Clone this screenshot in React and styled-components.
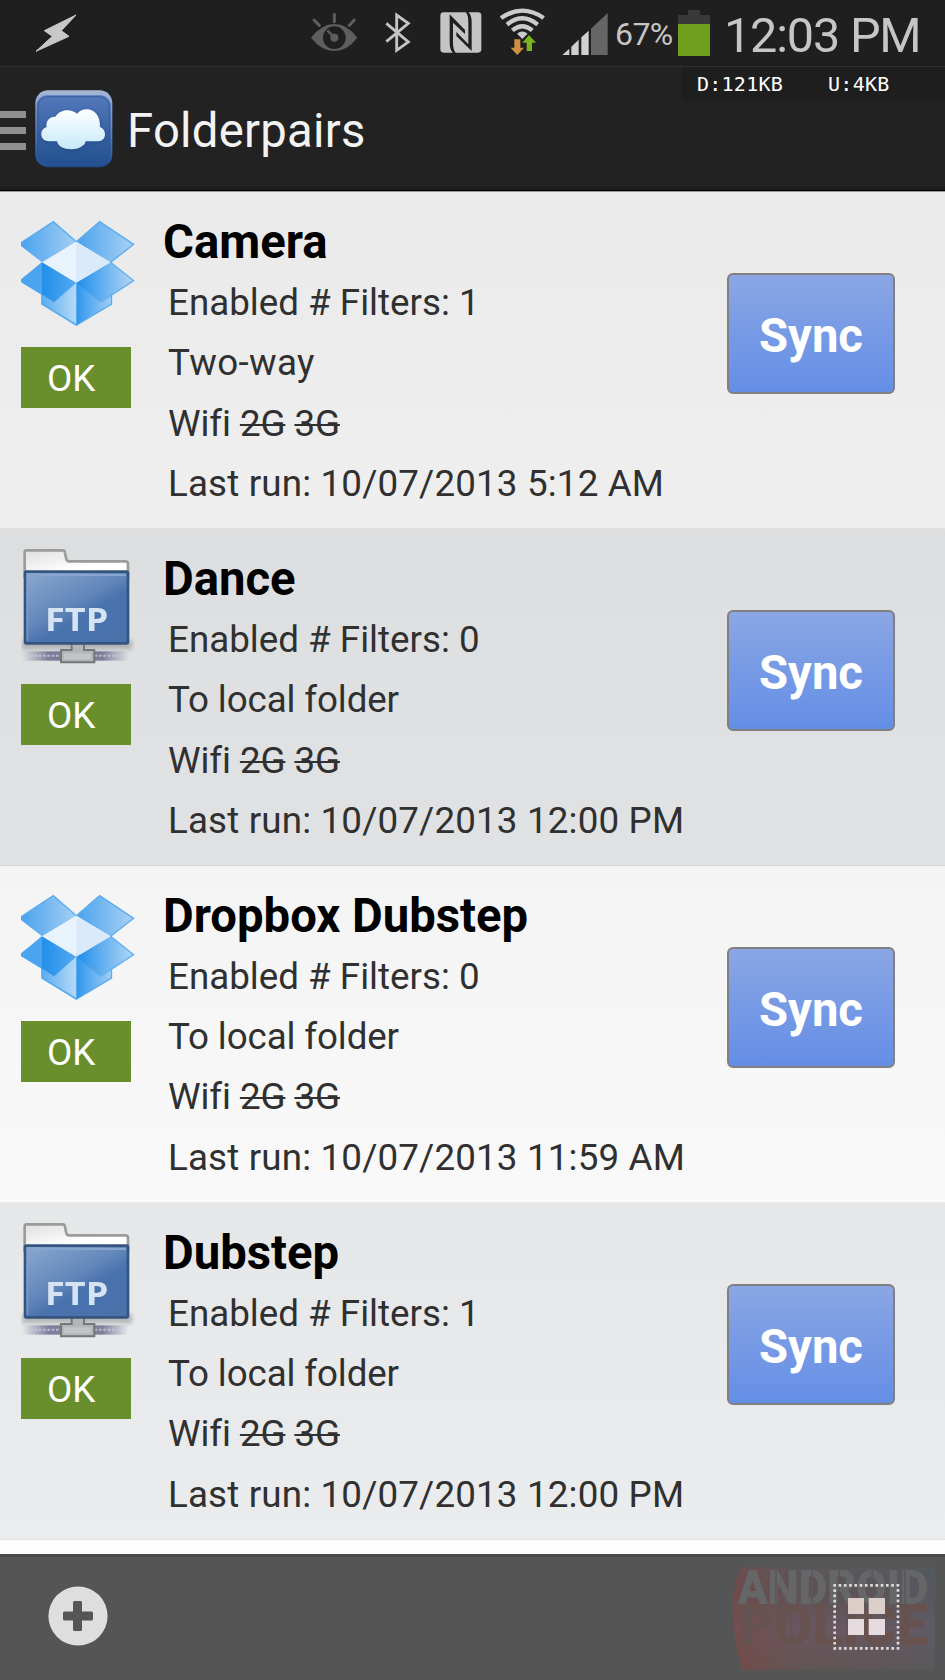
import React from "react";
import styled, { createGlobalStyle } from "styled-components";

const pairs = [
  {
    name: "Camera",
    service: "dropbox",
    filters: 1,
    direction: "Two-way",
    lastRun: "10/07/2013 5:12 AM",
  },
  {
    name: "Dance",
    service: "ftp",
    filters: 0,
    direction: "To local folder",
    lastRun: "10/07/2013 12:00 PM",
  },
  {
    name: "Dropbox Dubstep",
    service: "dropbox",
    filters: 0,
    direction: "To local folder",
    lastRun: "10/07/2013 11:59 AM",
  },
  {
    name: "Dubstep",
    service: "ftp",
    filters: 1,
    direction: "To local folder",
    lastRun: "10/07/2013 12:00 PM",
  },
];

const directionTracking = {
  "Two-way": 0.35,
  "To local folder": -0.12,
};

const Defs = () => (
  <HiddenSvg width="0" height="0">
    <defs>
      <linearGradient id="flap" x1="0" y1="0" x2="1" y2="0">
        <stop offset="0" stopColor="#4aa2ee" />
        <stop offset="1" stopColor="#a5cff3" />
      </linearGradient>
      <linearGradient id="flapSoft" x1="0" y1="0" x2="1" y2="0">
        <stop offset="0" stopColor="#4aa3ee" />
        <stop offset="1" stopColor="#a9d1f4" />
      </linearGradient>
      <linearGradient id="flapDeep" x1="0" y1="0" x2="1" y2="0">
        <stop offset="0" stopColor="#1f8eea" />
        <stop offset="1" stopColor="#b4d7f6" />
      </linearGradient>
      <linearGradient id="inner" x1="0" y1="0" x2="1" y2="0">
        <stop offset="0.35" stopColor="#1e8eea" />
        <stop offset="1" stopColor="#56aaf0" />
      </linearGradient>
      <linearGradient id="boxRight" x1="0" y1="0" x2="1" y2="0">
        <stop offset="0" stopColor="#2f96ec" />
        <stop offset="1" stopColor="#9fcdf5" />
      </linearGradient>
      <linearGradient id="boxLeft" x1="0" y1="0" x2="1" y2="0">
        <stop offset="0" stopColor="#5dadf0" />
        <stop offset="0.5" stopColor="#b6daf7" />
        <stop offset="1" stopColor="#b6daf7" />
      </linearGradient>
      <linearGradient id="paper" x1="0" y1="0" x2="1" y2="1">
        <stop offset="0" stopColor="#dfdfdf" />
        <stop offset="0.6" stopColor="#ffffff" />
      </linearGradient>
      <linearGradient id="folder" x1="0" y1="0" x2="0.8" y2="1">
        <stop offset="0" stopColor="#8aa9d0" />
        <stop offset="0.5" stopColor="#6286ba" />
        <stop offset="0.65" stopColor="#4a73ad" />
        <stop offset="1" stopColor="#4a72ab" />
      </linearGradient>
      <linearGradient id="wire" x1="0" y1="0" x2="1" y2="0">
        <stop offset="0" stopColor="#60608a" stopOpacity="0" />
        <stop offset="0.25" stopColor="#5c5c80" />
        <stop offset="0.75" stopColor="#5c5c80" />
        <stop offset="1" stopColor="#60608a" stopOpacity="0" />
      </linearGradient>
      <linearGradient id="tile" x1="0" y1="0" x2="0" y2="1">
        <stop offset="0" stopColor="#5478bb" />
        <stop offset="1" stopColor="#22508f" />
      </linearGradient>
      <linearGradient id="tileEdge" x1="0" y1="0" x2="0" y2="1">
        <stop offset="0" stopColor="#a9b9d4" />
        <stop offset="0.12" stopColor="#91aad3" />
        <stop offset="0.7" stopColor="#4673b4" />
        <stop offset="1" stopColor="#1f4a88" />
      </linearGradient>
      <linearGradient id="cloud" x1="0" y1="0" x2="0" y2="1">
        <stop offset="0" stopColor="#ffffff" />
        <stop offset="1" stopColor="#c7e9fa" />
      </linearGradient>
      <linearGradient id="haze" x1="0" y1="0" x2="0" y2="1">
        <stop offset="0" stopColor="#525a5f" />
        <stop offset="0.25" stopColor="#565459" />
        <stop offset="0.6" stopColor="#655b68" />
        <stop offset="0.85" stopColor="#60575b" />
        <stop offset="1" stopColor="#5a5859" />
      </linearGradient>
      <linearGradient id="hazeRed" x1="0" y1="0" x2="1" y2="0">
        <stop offset="0" stopColor="#80443f" stopOpacity="0.6" />
        <stop offset="0.35" stopColor="#7a4a48" stopOpacity="0.2" />
        <stop offset="1" stopColor="#555b62" stopOpacity="0.4" />
      </linearGradient>
      <filter id="soft" x="-10%" y="-10%" width="120%" height="120%">
        <feGaussianBlur stdDeviation="2.2" />
      </filter>
      <filter id="softer" x="-20%" y="-60%" width="140%" height="220%">
        <feGaussianBlur stdDeviation="6" />
      </filter>
    </defs>
  </HiddenSvg>
);

const DropboxIcon = () => (
  <svg width="114" height="122" viewBox="63 57 342 366">
    <path
      d="M126 310V342L229 405L334 342V310L229 270Z"
      fill="url(#boxLeft)"
      stroke="#55abf0"
      strokeWidth="5"
    />
    <path d="M229 278V404L332 341V310Z" fill="url(#boxRight)" />
    <path d="M126 217L63 272L162 337L229 278Z" fill="url(#inner)" />
    <path d="M126 217L63 268V277L126 315Z" fill="#4ba4ef" />
    <path
      d="M229 278L332 217L401 272L301 337Z"
      fill="url(#flapDeep)"
    />
    <path
      d="M332 217L401 272L301 337"
      fill="none"
      stroke="#62b1f2"
      strokeWidth="4"
    />
    <path
      d="M160 95L63 158V168L126 217L229 155Z"
      fill="url(#flap)"
    />
    <path d="M64 158L160 95L229 155" fill="none" stroke="#5aacef" strokeWidth="4" />
    <path
      d="M299 95L401 163L332 217L229 155Z"
      fill="url(#flapSoft)"
    />
    <path d="M229 155L299 95L401 163L332 217" fill="none" stroke="#5aacef" strokeWidth="4" />
    <path d="M229 155L130 217L229 278Z" fill="#e9f3fd" />
    <path d="M229 155L328 217L229 278Z" fill="#d9eafb" />
  </svg>
);

const FtpIcon = () => (
  <svg width="114" height="122" viewBox="63 78 342 366">
    <rect x="66" y="360" width="330" height="28" fill="#8b8c90" opacity="0.55" filter="url(#softer)" />
    <rect x="66" y="394" width="320" height="28" fill="url(#wire)" opacity="0.75" filter="url(#soft)" />
    <path d="M90 407H184M284 407H360" stroke="#c7c8dc" strokeWidth="6" strokeDasharray="8 5" opacity="0.8" />
    <g filter="url(#soft)">
      <path d="M215 370H252V390H283V427H183V390H215Z" fill="#b3b6b6" stroke="#747778" strokeWidth="6" />
    </g>
    <path d="M192 400H274V418H192Z" fill="#c2c5c5" />
    <g filter="url(#soft)">
      <path
        d="M74 170V96Q74 91 80 91H188Q194 91 195 98L199 118Q200 124 208 124H376Q384 124 384 132V170Z"
        fill="url(#paper)"
        stroke="#9a9b9b"
        strokeWidth="8"
      />
    </g>
    <g filter="url(#soft)">
      <rect x="75" y="155" width="309" height="215" rx="5" fill="url(#folder)" stroke="#34547f" strokeWidth="8" />
      <path d="M81 165H378" stroke="#87a6cf" strokeWidth="6" />
      <path d="M82 163V362" stroke="#88a7d0" strokeWidth="5" opacity="0.6" />
      <text
        x="135"
        y="332"
        textLength="190"
        lengthAdjust="spacingAndGlyphs"
        fontFamily="Open Sans, sans-serif"
        fontWeight="700"
        fontSize="98"
        fill="#d6e3f2"
      >
        FTP
      </text>
    </g>
  </svg>
);

const AppIcon = () => (
  <svg width="78" height="78" viewBox="107 269 234 234">
    <rect x="108" y="270" width="231" height="231" rx="38" fill="url(#tileEdge)" />
    <rect x="112" y="285" width="222" height="212" rx="32" fill="url(#tile)" />
    <rect x="116" y="289" width="214" height="204" rx="29" fill="none" stroke="#2d5497" strokeWidth="3" opacity="0.7" />
    <path
      d="M151 423C134 423 126 413 126 402C126 390 133 383 142 381C138 362 151 348 168 349C176 337 189 330 203 330C216 330 226 334 233 340C241 331 251 327 262 327C286 327 303 347 302 380C312 384 317 392 317 402C317 414 309 423 297 423H259C257 437 237 447 216 447C194 447 175 438 173 423Z"
      transform="translate(0 5)"
      fill="#1d3f7c"
      opacity="0.5"
      filter="url(#softer)"
    />
    <path
      d="M151 423C134 423 126 413 126 402C126 390 133 383 142 381C138 362 151 348 168 349C176 337 189 330 203 330C216 330 226 334 233 340C241 331 251 327 262 327C286 327 303 347 302 380C312 384 317 392 317 402C317 414 309 423 297 423H259C257 437 237 447 216 447C194 447 175 438 173 423Z"
      fill="url(#cloud)"
    />
  </svg>
);

const BoltIcon = () => (
  <svg width="44" height="66" viewBox="102 0 132 198">
    <path
      d="M228 45L133 92L157 109L108 154L207 109L184 92Z"
      fill="#c8c8c8"
      stroke="#c8c8c8"
      strokeWidth="3"
      filter="url(#soft)"
    />
  </svg>
);

const EyeIcon = () => (
  <svg width="48" height="66" viewBox="30 0 144 198">
    <path
      d="M42 60L58 76M103 43V65M163 60L148 76"
      stroke="#5e5e5e"
      strokeWidth="9"
      strokeLinecap="round"
    />
    <path d="M33 113Q65 72 103 72Q141 72 172 113Q141 153 103 153Q65 153 33 113Z" fill="#5e5e5e" />
    <circle cx="103" cy="113" r="34" fill="#1f1f1f" />
    <circle cx="103" cy="113" r="12" fill="#5e5e5e" />
    <path d="M82 91L100 110" stroke="#5e5e5e" strokeWidth="7" />
  </svg>
);

const BluetoothIcon = () => (
  <svg width="28" height="66" viewBox="252 0 84 198">
    <path
      d="M259 70L325 126L290 151V45L325 70L259 125"
      fill="none"
      stroke="#c4c4c4"
      strokeWidth="8.5"
    />
  </svg>
);

const NfcIcon = () => (
  <svg width="42" height="66" viewBox="419 0 126 198">
    <rect x="420" y="37" width="123" height="121" rx="10" fill="#c4c4c4" />
    <path
      d="M448 43L494 90V102L458 68V128Q458 148 466 159H458Q448 148 448 128Z"
      fill="#1f1f1f"
    />
    <path
      d="M514 153L468 108V96L504 133V64Q504 46 496 36H504Q514 46 514 66Z"
      fill="#1f1f1f"
    />
  </svg>
);

const WifiIcon = () => (
  <svg width="48" height="66" viewBox="597 0 144 198">
    <g fill="none" stroke="#cbcbcb" strokeWidth="13">
      <path d="M603 54Q667 10 731 54" />
      <path d="M621 74Q667 36 713 74" />
      <path d="M637 91Q667 66 697 91" />
    </g>
    <path d="M651 101Q667 88 683 101L667 117Z" fill="#cbcbcb" />
    <path d="M643 118H661V143H672L652 165L632 143H643Z" fill="#cf9244" />
    <path d="M680 153V128H667L687 105L708 128H696V153Z" fill="#77b51a" />
  </svg>
);

const SignalIcon = () => (
  <svg width="46" height="66" viewBox="785 0 138 198">
    <path d="M786 165L807 146V165Z" fill="#d0d0d0" />
    <path d="M813 165V140L835 119V165Z" fill="#d0d0d0" />
    <path d="M843 165V112L865 92V165Z" fill="#d0d0d0" />
    <path d="M872 165V86L922 39V165Z" fill="#666" />
  </svg>
);

const AddIcon = () => (
  <svg width="60" height="60" viewBox="0 0 60 60">
    <circle cx="30" cy="30" r="29.6" fill="#dedede" />
    <path
      d="M26.5 15H32.5Q34 15 34 16.500V25.500H43.500Q45 25.500 45 27V33Q45 34.500 43.500 34.500H34V43.500Q34 45 32.500 45H26.500Q25 45 25 43.500V34.500H16.500Q15 34.500 15 33V27Q15 25.500 16.500 25.500H25V16.500Q25 15 26.500 15Z"
      fill="#555"
    />
  </svg>
);

const GridIcon = () => (
  <svg width="68" height="68" viewBox="399 160 204 204">
    <path
      d="M404 167H594V356H404Z"
      fill="none"
      stroke="#dcdada"
      strokeWidth="8"
      strokeDasharray="8 7.79"
      strokeDashoffset="4"
    />
    <path d="M444 205H492V253H444ZM506 205H555V253H506Z" fill="#dccfca" />
    <path d="M444 268H492V316H444ZM506 268H555V316H506Z" fill="#e6dce0" />
  </svg>
);

const Watermark = () => (
  <WatermarkSvg width="202" height="104" viewBox="99 110 606 312">
    <path d="M124 111H705V420H129Q99 340 99 230Q99 160 124 111Z" fill="url(#haze)" />
    <path d="M124 111H705V420H129Q99 340 99 230Q99 160 124 111Z" fill="url(#hazeRed)" />
    <g fontFamily="Roboto, sans-serif" fontWeight="900">
      <text x="113" y="221" fontSize="146" textLength="572" lengthAdjust="spacingAndGlyphs" fill="#656667">
        ANDROID
      </text>
      <text x="112" y="345" fontSize="172" textLength="572" lengthAdjust="spacingAndGlyphs" fill="#67524f">
        POLICE
      </text>
    </g>
    <path
      d="M228 117V221M293 117V221M337 117V221M417 117V221M517 117V221M615 117V221M152 222V345M274 222V345M549 222V345"
      stroke="#5c5659"
      strokeWidth="5"
    />
  </WatermarkSvg>
);

const FolderPair = ({ pair, shaded }) => (
  <PairRow $shaded={shaded}>
    <StatusCol>
      {pair.service === "ftp" ? <FtpIcon /> : <DropboxIcon />}
      <StatusLabel>OK</StatusLabel>
    </StatusCol>
    <Details>
      <PairName>{pair.name}</PairName>
      <Detail>Enabled # Filters: {pair.filters}</Detail>
      <Detail $tracking={directionTracking[pair.direction]}>
        {pair.direction}
      </Detail>
      <Detail $tracking={-0.1}>
        Wifi <s>2G</s> <s>3G</s>
      </Detail>
      <Detail $tracking={0.16}>Last run: {pair.lastRun}</Detail>
    </Details>
    <SyncButton>Sync</SyncButton>
  </PairRow>
);

const App = () => {
  return (
    <Screen>
      <GlobalStyle />
      <Defs />
      <StatusBar>
        <BoltIcon />
        <StatusIcons>
          <EyeIcon />
          <BluetoothIcon />
          <NfcIcon />
          <WifiIcon />
          <SignalIcon />
        </StatusIcons>
        <Percent>67%</Percent>
        <Battery />
        <Clock>12:03 PM</Clock>
      </StatusBar>
      <ActionBar>
        <Drawer>
          <i />
          <i />
          <i />
        </Drawer>
        <Launcher>
          <AppIcon />
        </Launcher>
        <Title>Folderpairs</Title>
        <Traffic>
          <span>D:121KB</span>
          <span>U:4KB</span>
        </Traffic>
      </ActionBar>
      <PairList>
        {pairs.map((pair, ind) => (
          <FolderPair key={ind} pair={pair} shaded={ind % 2 === 1} />
        ))}
      </PairList>
      <BottomBar>
        <BarButton aria-label="Add">
          <AddIcon />
        </BarButton>
        <BarButton aria-label="Grid">
          <GridIcon />
        </BarButton>
        <Watermark />
      </BottomBar>
    </Screen>
  );
};

export default App;

// styles
const GlobalStyle = createGlobalStyle`
  * {
    box-sizing: border-box;
  }
  body {
    margin: 0;
    font-family: Roboto, sans-serif;
  }
  svg {
    display: block;
    flex-shrink: 0;
  }
`;
const HiddenSvg = styled.svg`
  position: absolute;
`;
const Screen = styled.div`
  width: 945px;
  height: 1680px;
  display: flex;
  flex-direction: column;
  overflow: hidden;
`;
const StatusBar = styled.div`
  height: 67px;
  display: flex;
  align-items: flex-start;
  padding-left: 34px;
  background: #1f1f1f;
  border-bottom: 1px solid #2f2f2f;
  color: #c6c6c6;
  white-space: nowrap;
`;
const StatusIcons = styled.div`
  display: flex;
  margin-left: 232px;

  svg:nth-child(2) {
    margin-left: 26px;
  }
  svg:nth-child(3) {
    margin-left: 28px;
  }
  svg:nth-child(4) {
    margin-left: 17px;
  }
  svg:nth-child(5) {
    margin-left: 15px;
  }
`;
const Percent = styled.span`
  width: 63px;
  margin-left: 7px;
  font-size: 32px;
  line-height: 69px;
  letter-spacing: -0.6px;
`;
const Battery = styled.div`
  width: 32px;
  height: 46px;
  margin-top: 10px;
  background: linear-gradient(#6f9f1c, #6f9f1c) 0 14px / 32px 32px no-repeat,
    #393939;
  clip-path: polygon(
    0 5px,
    10px 5px,
    10px 0,
    22px 0,
    22px 5px,
    100% 5px,
    100% 100%,
    0 100%
  );
`;
const Clock = styled.span`
  margin-left: 14px;
  font-size: 48.5px;
  line-height: 71px;
  letter-spacing: -1.15px;
`;
const ActionBar = styled.header`
  height: 125px;
  display: flex;
  align-items: flex-start;
  background: linear-gradient(
    #222 0 119px,
    #1b1b1b 120px 123px,
    #000 123px 124px,
    #999 124px
  );
`;
const Drawer = styled.div`
  display: flex;
  flex-direction: column;
  gap: 9px;
  width: 26px;
  margin: 44px 9px 0 0;

  i {
    height: 7px;
    background: #8f8f8f;
  }
`;
const Launcher = styled.div`
  margin-top: 23px;
`;
const Title = styled.h1`
  margin: 0 0 0 14px;
  flex: 1;
  font-size: 47.25px;
  font-weight: 400;
  line-height: 56px;
  padding-top: 36px;
  letter-spacing: 0.25px;
  color: #f3f3f3;
`;
const Traffic = styled.div`
  display: flex;
  gap: 45px;
  width: 263px;
  height: 33px;
  padding-left: 15px;
  background: #1e1e1e;
  color: #fff;
  font-family: "DejaVu Sans Mono", monospace;
  font-size: 20px;
  line-height: 34px;
  letter-spacing: 0.25px;
`;
const PairList = styled.div`
  flex: 1;
  background: linear-gradient(#eaeaea, #fefefe);
`;
const PairRow = styled.div`
  display: flex;
  align-items: flex-start;
  height: 336.9px;
  padding-left: 21px;
  border-bottom: 1px solid rgba(0, 0, 0, 0.05);
  background: ${(props) =>
    props.$shaded ? "rgba(0, 15, 35, 0.075)" : "transparent"};
`;
const StatusCol = styled.div`
  width: 142px;
  padding-top: 17px;
`;
const StatusLabel = styled.div`
  width: 110px;
  height: 61px;
  margin-top: 16px;
  padding-left: 26px;
  background: #698f2c;
  color: #fff;
  font-size: 36.75px;
  line-height: 64px;
`;
const Details = styled.div`
  flex: 1;
  padding-top: 21px;
`;
const PairName = styled.h2`
  margin: 0 0 2px;
  font-size: 47.25px;
  font-weight: 700;
  line-height: 58px;
  color: #000;
`;
const Detail = styled.div`
  padding-left: 5px;
  font-size: 36.75px;
  line-height: 60.35px;
  letter-spacing: ${(props) => props.$tracking || 0}px;
  color: #303030;

  s {
    text-decoration-thickness: 2px;
  }
`;
const SyncButton = styled.button`
  width: 168px;
  height: 121px;
  margin: 81px 50px 0 0;
  padding: 5px 0 0;
  border: 2px solid #808080;
  border-radius: 6px;
  background: linear-gradient(#8aa6e4, #648ee6);
  color: #fff;
  font-family: inherit;
  font-size: 47.25px;
  font-weight: 700;
`;
const BottomBar = styled.footer`
  position: relative;
  height: 126px;
  display: flex;
  align-items: flex-start;
  justify-content: space-between;
  padding: 26px 44px 0 48px;
  background: #555;
  border-top: 3px solid #484848;
`;
const BarButton = styled.button`
  position: relative;
  z-index: 1;
  padding: 0;
  border: 0;
  background: none;

  &:first-child {
    margin-top: 3px;
  }
`;
const WatermarkSvg = styled.svg`
  position: absolute;
  right: 10px;
  top: 10px;
  overflow: visible;
`;
